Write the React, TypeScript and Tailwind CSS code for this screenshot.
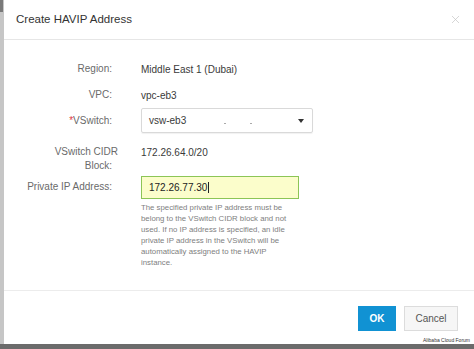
import { X } from "lucide-react";

const font = { fontFamily: '"Liberation Sans", Arial, sans-serif' };

function Row({ label, children }: { label: React.ReactNode; children: React.ReactNode }) {
  return (
    <div className="flex items-start">
      <div className="w-[108px] shrink-0 text-right text-[10px] leading-[14px] text-[#6a6a6a]">{label}</div>
      <div className="ml-[29px] flex-1">{children}</div>
    </div>
  );
}

export default function App() {
  return (
    <div className="relative w-[474px] h-[349px] bg-[#c6c6c6] overflow-hidden" style={font}>
      {/* darker top of the left strip */}
      <div className="absolute left-0 top-0 w-[3px] h-[12px] bg-[#7a7a7a]" />
      <div className="ml-[4px] h-[344px] bg-white flex flex-col">
        {/* header */}
        <div className="h-[40px] flex items-center justify-between pl-[12px] pr-[12px] border-b border-[#e6e6e6]">
          <span className="text-[11.5px] text-[#333]">Create HAVIP Address</span>
          <X className="w-[13px] h-[13px] text-[#c4c4c4]" strokeWidth={1.3} />
        </div>

        {/* body */}
        <div className="flex-1 pt-[22px] flex flex-col text-[10px] text-[#3a3a3a]">
          <Row label="Region:">
            <span className="leading-[14px]">Middle East 1 (Dubai)</span>
          </Row>
          <div className="h-[11px]" />
          <Row label="VPC:">
            <span className="leading-[14px]">vpc-eb3</span>
          </Row>
          <div className="h-[5px]" />
          <Row label={<span className="relative top-[6px]"><span className="text-[#e0393e]">*</span>VSwitch:</span>}>
            <div className="w-[172px] h-[25px] border border-[#d9d9d9] rounded-[2px] shadow-[0_1px_1px_rgba(0,0,0,0.06)] flex items-center justify-between pl-[7px] pr-[8px]">
              <span className="flex items-center gap-[10px]">
                vsw-eb3
                <span className="w-[2px] h-[1px] bg-[#aaa] mt-[6px] ml-[28px]" />
                <span className="w-[2px] h-[1px] bg-[#aaa] mt-[6px] ml-[14px]" />
              </span>
              <span className="w-0 h-0 border-l-[3px] border-r-[3px] border-t-[4px] border-l-transparent border-r-transparent border-t-[#333]" />
            </div>
          </Row>
          <div className="h-[12px]" />
          <Row label={<><span className="mr-[-6px]">VSwitch CIDR</span><br />Block:</>}>
            <span className="leading-[14px]">172.26.64.0/20</span>
          </Row>
          <div className="h-[3px]" />
          <Row label={<span className="relative top-[4px]">Private IP Address:</span>}>
            <div className="w-[158px] h-[23px] border border-[#8cc556] bg-[#fbfdcb] flex items-center pl-[7px] text-[#222]">
              172.26.77.30<span className="w-px h-[11px] bg-[#222] ml-px" />
            </div>
            <p className="mt-[3px] w-[156px] text-[7.8px] leading-[11px] text-[#808080]">
              The specified private IP address must be belong to the VSwitch CIDR block and not used. If no IP address is specified, an idle private IP address in the VSwitch will be automatically assigned to the HAVIP instance.
            </p>
          </Row>
        </div>

        {/* footer */}
        <div className="h-[54px] border-t border-[#ececec] flex items-start justify-end pt-[15px] pr-[16px] gap-[8px]">
          <button className="w-[38px] h-[25px] bg-[#1192d3] text-white text-[10px] font-bold">OK</button>
          <button className="w-[54px] h-[25px] bg-[#f6f6f6] border border-[#dcdcdc] text-[#555] text-[10px]">Cancel</button>
        </div>
      </div>
      <span className="absolute right-[4px] bottom-[6px] text-[5px] leading-none text-[#333]">Alibaba Cloud Forum</span>
      <div className="h-[5px] bg-[#6b6b6b]" />
    </div>
  );
}
